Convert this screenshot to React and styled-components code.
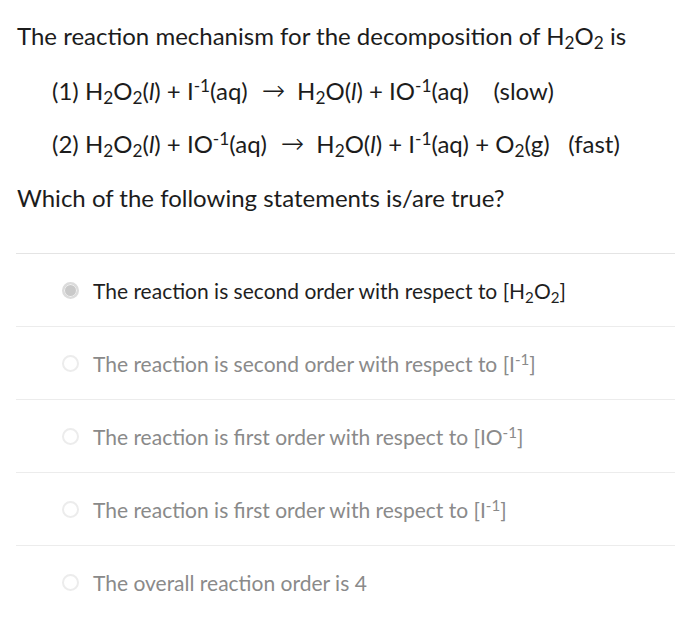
import React from 'react';
import styled, { createGlobalStyle } from 'styled-components';

const GlobalStyle = createGlobalStyle`
  body {
    margin: 0;
    background: #fff;
    font-family: Lato, "Open Sans", sans-serif;
    color: #1c1c1c;
  }
`;

const Page = styled.div`
  width: 675px;
  padding-top: 19px;
`;

const Stem = styled.div`
  padding-left: 17px;
  font-size: 24px;
  line-height: 34px;
`;

const Paragraph = styled.p`
  margin: 0 0 ${(p) => p.gap ?? 20}px;
`;

const Step = styled.p`
  margin: 0 0 ${(p) => p.gap ?? 20}px;
  padding-left: 35px;
  white-space: pre;
`;

const Answers = styled.div`
  margin-top: 38px;
  margin-left: 16px;
  border-top: 1px solid #e4e4e4;
`;

const AnswerRow = styled.label`
  display: flex;
  align-items: center;
  height: 72px;
  border-bottom: 1px solid #ececec;
  padding-left: 46px;
  font-size: 21px;
  color: ${(p) => (p.selected ? '#1f1f1f' : '#8a8a8a')};

  &:last-child {
    border-bottom: none;
  }
`;

const Radio = styled.span`
  box-sizing: border-box;
  width: 17px;
  height: 17px;
  border-radius: 50%;
  border: 2px solid ${(p) => (p.selected ? '#dcdcdc' : '#ececec')};
  background: ${(p) => (p.selected ? '#c9c9c9' : '#fff')};
  box-shadow: ${(p) => (p.selected ? 'inset 0 0 0 1px #f2f2f2' : 'none')};
  margin-right: 14px;
  flex-shrink: 0;
`;

const Sub = styled.sub`
  font-size: 0.72em;
  vertical-align: -0.25em;
  line-height: 0;
`;

const Sup = styled.sup`
  font-size: 0.72em;
  vertical-align: 0.45em;
  line-height: 0;
`;

const Arrow = styled.span`
  display: inline-block;
  margin: 0 12px 0 14px;
  font-family: "DejaVu Sans", sans-serif;
  font-weight: 200;
  font-size: 28px;
  line-height: 0;
`;

const H2O2 = () => (
  <>
    H<Sub>2</Sub>O<Sub>2</Sub>
  </>
);

const answers = [
  { id: 'a', selected: true, text: <>The reaction is second order with respect to [<H2O2 />]</> },
  { id: 'b', text: <>The reaction is second order with respect to [I<Sup>-1</Sup>]</> },
  { id: 'c', text: <>The reaction is first order with respect to [IO<Sup>-1</Sup>]</> },
  { id: 'd', text: <>The reaction is first order with respect to [I<Sup>-1</Sup>]</> },
  { id: 'e', text: <>The overall reaction order is 4</> },
];

export default function App() {
  return (
    <Page>
      <GlobalStyle />
      <Stem>
        <Paragraph gap={21}>
          The reaction mechanism for the decomposition of <H2O2 /> is
        </Paragraph>
        <Step gap={19}>
          (1) <H2O2 />(<i>l</i>) + I<Sup>-1</Sup>(aq)<Arrow>→</Arrow>H<Sub>2</Sub>O(<i>l</i>) + IO<Sup>-1</Sup>(aq){'    '}(slow)
        </Step>
        <Step gap={20}>
          (2) <H2O2 />(<i>l</i>) + IO<Sup>-1</Sup>(aq)<Arrow>→</Arrow>H<Sub>2</Sub>O(<i>l</i>) + I<Sup>-1</Sup>(aq) + O<Sub>2</Sub>(g){'   '}(fast)
        </Step>
        <Paragraph gap={20}>Which of the following statements is/are true?</Paragraph>
      </Stem>
      <Answers>
        {answers.map((a) => (
          <AnswerRow key={a.id} selected={a.selected}>
            <Radio selected={a.selected} />
            <span>{a.text}</span>
          </AnswerRow>
        ))}
      </Answers>
    </Page>
  );
}
